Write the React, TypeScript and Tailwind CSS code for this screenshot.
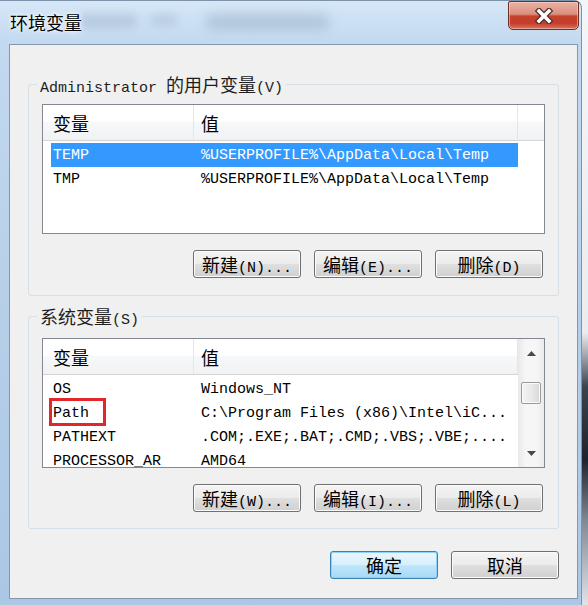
import type { ReactNode } from 'react'

const CJK = /([\u3400-\u9fff]+)/

function Mixed({ text }: { text: string }) {
  return (
    <>
      {text.split(CJK).map((part, i) =>
        i % 2 === 1 ? (
          <span key={i} className="font-['Noto_Sans_CJK_SC',sans-serif] text-[18px] leading-[18px]">
            {part}
          </span>
        ) : (
          part
        ),
      )}
    </>
  )
}

function Button({ label, primary }: { label: string; primary?: boolean }) {
  return (
    <button
      className={
        primary
          ? "flex h-[28px] w-[108px] items-center justify-center rounded-[3px] border border-[#3c7fb1] bg-[linear-gradient(to_bottom,#eaf6fd_0%,#d9f0fc_48%,#bee6fd_52%,#a7d9f5_100%)] font-['Liberation_Mono',monospace] text-[15px] leading-[18px] text-black shadow-[inset_0_0_0_1px_#8fd3f8]"
          : "flex h-[28px] w-[108px] items-center justify-center rounded-[3px] border border-[#707070] bg-[linear-gradient(to_bottom,#f4f4f4_0%,#ececec_48%,#dfdfdf_52%,#d0d0d0_100%)] font-['Liberation_Mono',monospace] text-[15px] leading-[18px] text-black shadow-[inset_0_0_0_1px_#fbfbfb]"
      }
    >
      <span className="h-[18px] whitespace-pre">
        <Mixed text={label} />
      </span>
    </button>
  )
}

function Group({ title, children, className }: { title: string; children: ReactNode; className: string }) {
  return (
    <fieldset className={`rounded-[3px] border border-[#d5dfe5] px-[13px] ${className}`}>
      <legend className="ml-[-5px] h-[18px] whitespace-pre px-[3px] font-['Liberation_Mono',monospace] text-[15px] leading-[18px] text-[#1e1e1e]">
        <Mixed text={title} />
      </legend>
      {children}
    </fieldset>
  )
}

type Row = { name: string; value: string; selected?: boolean; marked?: boolean }

function ScrollBar() {
  return (
    <div className="flex w-[26px] shrink-0 flex-col bg-[linear-gradient(to_right,#e9e9e9,#f6f6f6_30%,#f6f6f6_70%,#ebebeb)]">
      <div className="flex h-[28px] items-center justify-center">
        <svg width="9" height="5" viewBox="0 0 9 5">
          <path d="M0 5 L4.5 0 L9 5 Z" fill="#4a4a4a" />
        </svg>
      </div>
      <div className="flex-1 px-[3px] pt-[15px]">
        <div className="h-[22px] rounded-[2px] border border-[#9a9a9a] bg-[linear-gradient(to_right,#f4f4f4,#e9e9e9_50%,#d8d8d8)] shadow-[inset_0_0_0_1px_#fafafa]" />
      </div>
      <div className="flex h-[28px] items-center justify-center">
        <svg width="9" height="5" viewBox="0 0 9 5">
          <path d="M0 0 L9 0 L4.5 5 Z" fill="#4a4a4a" />
        </svg>
      </div>
    </div>
  )
}

function ListView({ rows, scrollbar }: { rows: Row[]; scrollbar?: boolean }) {
  return (
    <div className="flex h-[130px] overflow-hidden border border-[#828790] bg-white">
      <div className="flex min-w-0 flex-1 flex-col">
        <div className="flex h-[36px] shrink-0 border-b border-[#d5d5d5] bg-[linear-gradient(to_bottom,#ffffff_0%,#ffffff_45%,#f7f8f9_50%,#f1f2f4_100%)]">
          <div className="flex w-[151px] items-center border-r border-[#e3e6ea] pl-[10px] text-black">
            <Mixed text="变量" />
          </div>
          <div className="flex w-[324px] items-center border-r border-[#e3e6ea] pl-[7px] text-black">
            <Mixed text="值" />
          </div>
        </div>
        <div className="pt-[2px] font-['Liberation_Mono',monospace] text-[15px] leading-[26px]">
          {rows.map((r) => (
            <div
              key={r.name}
              className={
                r.selected
                  ? 'ml-[8px] flex h-[24px] w-[467px] bg-[#3399ff] text-white'
                  : 'ml-[8px] flex h-[24px] w-[467px] text-black'
              }
            >
              <div className="relative h-[24px] w-[150px] shrink-0 whitespace-pre pl-[2px]">
                {r.name}
                {r.marked && (
                  <div className="absolute left-[-2px] top-[-3px] h-[28px] w-[57px] border-[3px] border-[#e3262a]" />
                )}
              </div>
              <div className="h-[24px] min-w-0 flex-1 whitespace-pre">{r.value}</div>
            </div>
          ))}
        </div>
      </div>
      {scrollbar && <ScrollBar />}
    </div>
  )
}

const userVars: Row[] = [
  { name: 'TEMP', value: '%USERPROFILE%\\AppData\\Local\\Temp', selected: true },
  { name: 'TMP', value: '%USERPROFILE%\\AppData\\Local\\Temp' },
]

const systemVars: Row[] = [
  { name: 'OS', value: 'Windows_NT' },
  { name: 'Path', value: 'C:\\Program Files (x86)\\Intel\\iC...', marked: true },
  { name: 'PATHEXT', value: '.COM;.EXE;.BAT;.CMD;.VBS;.VBE;....' },
  { name: 'PROCESSOR_AR', value: 'AMD64' },
]

export default function App() {
  return (
    <div className="flex h-[605px] w-[588px] overflow-hidden bg-[linear-gradient(to_bottom,#f3f6f9_0%,#e8edf2_55%,#3a434e_64%,#1d242d_76%,#7f8993_86%,#dfe4ea_100%)]">
      <div className="flex w-[582px] shrink-0 flex-col rounded-tr-[8px] border-r border-t border-[#7d93ab] bg-[linear-gradient(to_bottom,#d6e7f7_0%,#c2d9f0_7%,#b9d1ea_40%,#aac7e5_100%)]">
        {/* title bar */}
        <div className="relative flex h-[43px] shrink-0 items-start">
          <div className="absolute left-[78px] top-[13px] h-[14px] w-[60px] rounded-full bg-[#8fa2b6] opacity-35 blur-[5px]" />
          <div className="absolute left-[150px] top-[14px] h-[10px] w-[28px] rounded-full bg-[#8fa2b6] opacity-35 blur-[5px]" />
          <div className="absolute left-[205px] top-[13px] h-[16px] w-[125px] rounded-full bg-[#8397ad] opacity-35 blur-[6px]" />
          <div className="relative pl-[10px] pt-[11px] font-['Noto_Sans_CJK_SC',sans-serif] text-[18px] leading-[20px] text-black [text-shadow:0_0_6px_#fff,0_0_3px_#fff]">
            环境变量
          </div>
          <div className="relative ml-auto mr-[2px] flex h-[29px] w-[71px] items-center justify-center rounded-b-[5px] rounded-t-[2px] border border-[#6e2f27] bg-[linear-gradient(to_bottom,#eab1a3_0%,#dc907f_45%,#c5432f_52%,#c33d2a_78%,#d9735c_100%)] shadow-[inset_0_0_0_1px_rgba(255,220,210,0.5)]">
            <svg width="20" height="16" viewBox="0 0 20 16">
              <path d="M5 3 L15 13 M15 3 L5 13" stroke="#4a2a26" strokeWidth="6" strokeLinecap="square" />
              <path d="M5 3 L15 13 M15 3 L5 13" stroke="#ffffff" strokeWidth="3.6" strokeLinecap="square" />
            </svg>
          </div>
        </div>

        {/* client */}
        <div className="mb-[6px] ml-[9px] mr-[3px] flex flex-1 flex-col border border-[#8497ad] bg-[#f0f0f0]">
          <Group title="Administrator 的用户变量(V)" className="mx-[18px] mt-[30px] pb-[17px] pt-[11px]">
            <ListView rows={userVars} />
            <div className="mt-[16px] flex justify-end gap-[13px] pr-[2px]">
              <Button label="新建(N)..." />
              <Button label="编辑(E)..." />
              <Button label="删除(D)" />
            </div>
          </Group>

          <Group title="系统变量(S)" className="mx-[18px] mt-[11px] pb-[16px] pt-[13px]">
            <ListView rows={systemVars} scrollbar />
            <div className="mt-[16px] flex justify-end gap-[13px] pr-[2px]">
              <Button label="新建(W)..." />
              <Button label="编辑(I)..." />
              <Button label="删除(L)" />
            </div>
          </Group>

          <div className="mr-[18px] mt-[22px] flex justify-end gap-[13px]">
            <Button label="确定" primary />
            <Button label="取消" />
          </div>
        </div>
      </div>
      <div className="flex-1" />
    </div>
  )
}
